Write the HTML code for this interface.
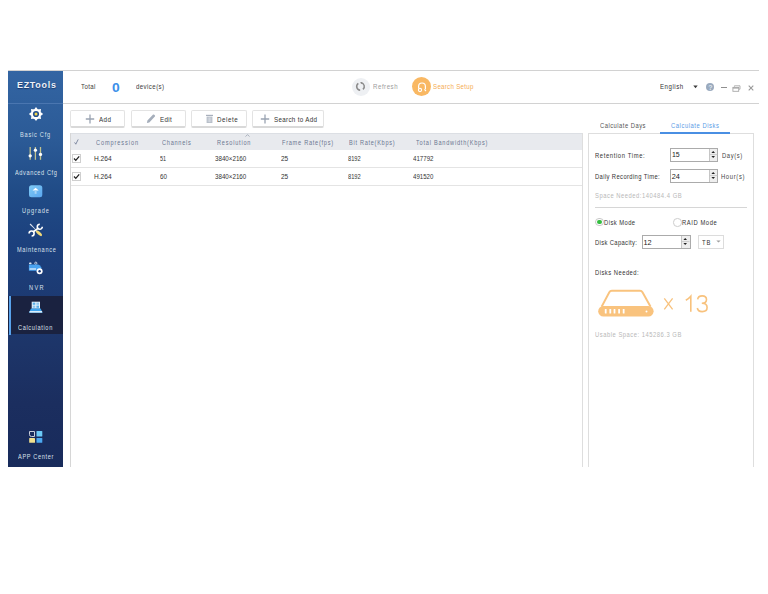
<!DOCTYPE html>
<html><head><meta charset="utf-8">
<style>
*{margin:0;padding:0;box-sizing:border-box}
html,body{width:768px;height:594px;background:#fff;overflow:hidden;font-family:"Liberation Sans",sans-serif;color:#333}
.a{position:absolute}
.t{position:absolute;white-space:nowrap;transform-origin:0 0;font-family:"Liberation Sans",sans-serif}
#side{left:8px;top:70px;width:55px;height:397px;background:linear-gradient(180deg,#3365a3 0%,#2b5a96 18%,#204b86 31%,#1c407d 44%,#1d3569 69%,#1b2e5f 84%,#182b5b 100%)}
.hl{position:absolute;height:1px}
.vl{position:absolute;width:1px}
.btn{position:absolute;top:110px;height:18px;border:1px solid #e3e3e3;border-bottom:2px solid #d9d9d9;border-radius:2px;background:#fff}
.cb{position:absolute;left:72px;width:9px;height:9px;border:1px solid #cfcfcf;background:#fff}
.inp{position:absolute;border:1px solid #ababab;background:#fff}
.spin{position:absolute;top:0;bottom:0;right:0;border-left:1px solid #c6c6c6;background:#eeeeee}
</style></head><body>
<div id="side" class="a">
  <div class="a" style="left:0;top:33px;width:55px;height:1px;background:#4a76b0"></div>
  
  <!-- gear -->
  <svg class="a" style="left:18.7px;top:35.1px" width="18" height="18" viewBox="0 0 18 18">
    <g transform="translate(9 9)" fill="#fff">
      <circle r="5.2"/>
      <polygon points="-1.9,-4.6 0,-7.1 1.9,-4.6" transform="rotate(0)"/>
      <polygon points="-1.9,-4.6 0,-7.1 1.9,-4.6" transform="rotate(45)"/>
      <polygon points="-1.9,-4.6 0,-7.1 1.9,-4.6" transform="rotate(90)"/>
      <polygon points="-1.9,-4.6 0,-7.1 1.9,-4.6" transform="rotate(135)"/>
      <polygon points="-1.9,-4.6 0,-7.1 1.9,-4.6" transform="rotate(180)"/>
      <polygon points="-1.9,-4.6 0,-7.1 1.9,-4.6" transform="rotate(225)"/>
      <polygon points="-1.9,-4.6 0,-7.1 1.9,-4.6" transform="rotate(270)"/>
      <polygon points="-1.9,-4.6 0,-7.1 1.9,-4.6" transform="rotate(315)"/>
      <circle r="3.1" fill="#24508f"/>
      <circle r="1.5" fill="#f3d54a"/>
    </g>
  </svg>
  <!-- sliders -->
  <svg class="a" style="left:19px;top:75px" width="18" height="16" viewBox="0 0 18 16">
    <g stroke="#c2c28c" stroke-width="1.3">
      <line x1="3.2" y1="2" x2="3.2" y2="14.8"/>
      <line x1="8.4" y1="2" x2="8.4" y2="14.8"/>
      <line x1="13.5" y1="2" x2="13.5" y2="14.8"/>
    </g>
    <g fill="#fff">
      <circle cx="3.2" cy="10.8" r="1.65"/>
      <circle cx="8.4" cy="5.2" r="1.65"/>
      <circle cx="13.5" cy="9.4" r="1.65"/>
    </g>
  </svg>
  <!-- upgrade -->
  <svg class="a" style="left:19px;top:113px" width="18" height="16" viewBox="0 0 18 16">
    <defs><linearGradient id="ug" x1="0" y1="0" x2="1" y2="1"><stop offset="0" stop-color="#80cbf5"/><stop offset="1" stop-color="#5aa6ef"/></linearGradient></defs><rect x="2" y="2.2" width="13.3" height="12" rx="2.5" fill="url(#ug)"/>
    <polygon points="5.5,7.5 8.6,4.8 11.7,7.5" fill="#fff"/>
    <rect x="7.6" y="7.3" width="2" height="3.5" fill="#a8d4f5"/>
  </svg>
  <!-- maintenance -->
  <svg class="a" style="left:19px;top:151px" width="18" height="18" viewBox="0 0 18 18">
    <path d="M2.6 3.6 L3.6 2.6 L8.8 8.4 L8.4 8.8 Z" fill="#dfe5f0"/>
    <ellipse cx="11.9" cy="12.2" rx="3.9" ry="1.5" transform="rotate(42 11.9 12.2)" fill="#f3da78"/>
    <path d="M6 11 L11.3 7.1" stroke="#fff" stroke-width="1.6"/>
    <path d="M15.3 5.7 A2.5 2.5 0 1 1 12.8 3.2" fill="none" stroke="#fff" stroke-width="1.6"/>
    <path d="M2.1 12.5 A2.5 2.5 0 1 1 4.6 15" fill="none" stroke="#fff" stroke-width="1.6"/>
  </svg>
  <!-- nvr -->
  <svg class="a" style="left:19px;top:190px" width="18" height="18" viewBox="0 0 18 18">
    <rect x="2" y="2.6" width="2.6" height="1.6" rx="0.8" fill="#dfe8f5"/>
    <circle cx="8.8" cy="3.2" r="1.1" fill="none" stroke="#dfe8f5" stroke-width="0.8"/>
    <path d="M1.9 4.4 H10.6 Q12 4.4 13 5.6 L14.2 7.2 V10.8 H1.9 Z" fill="#4aa3f0"/>
    <rect x="2.6" y="8.3" width="6.4" height="1.4" fill="#d4e8fb"/>
    <circle cx="12.6" cy="11.3" r="3" fill="#fff"/>
    <circle cx="12.6" cy="11.3" r="1.2" fill="#1c3a78"/>
  </svg>
  <!-- active -->
  <div class="a" style="left:0;top:226px;width:55px;height:38px;background:#1a2240"></div>
  <div class="a" style="left:1px;top:226px;width:1.5px;height:38.5px;background:#58a2ec"></div>
  <svg class="a" style="left:19px;top:229px" width="18" height="16" viewBox="0 0 18 16">
    <rect x="4.7" y="2.7" width="8.3" height="7" fill="#e6f2fb"/>
    <rect x="5.7" y="3.6" width="2.6" height="2.2" fill="#59aee8"/>
    <rect x="9.4" y="3.6" width="2.6" height="2.2" fill="#8cc6ee"/>
    <rect x="5.7" y="6.6" width="2.6" height="2.2" fill="#8cc6ee"/>
    <rect x="9.4" y="6.6" width="2.6" height="2.2" fill="#59aee8"/>
    <path d="M4 9.5 H13.6 L15.7 13.8 H1.9 Z" fill="#3ea4ef"/>
    <rect x="2.5" y="12" width="12.6" height="1.6" fill="#d9eefc"/>
  </svg>
  <!-- app center -->
  <svg class="a" style="left:19px;top:359px" width="18" height="16" viewBox="0 0 18 16">
    <path d="M2.5 2.5 H7.5 V7.5 H4.5 Q2.5 7.5 2.5 5.5 Z" fill="none" stroke="#c9cfdc" stroke-width="1"/>
    <rect x="9.5" y="2" width="5.8" height="5.5" rx="0.6" fill="#6ccaf7"/>
    <rect x="2.2" y="9" width="5.8" height="4.8" rx="0.6" fill="#f1e08e"/>
    <rect x="9.5" y="9" width="5.8" height="4.8" rx="0.6" fill="#4ca9f1"/>
  </svg>
</div>

<!-- window borders -->
<div class="hl" style="left:8px;top:70px;width:751px;background:#d2d2d2"></div>
<div class="hl" style="left:63px;top:103px;width:696px;background:#d2d2d2"></div>

<!-- refresh -->
<div class="a" style="left:351.5px;top:77.5px;width:18.5px;height:18.5px;border-radius:50%;background:#eef0f3"></div>
<svg class="a" style="left:355.2px;top:81.2px" width="11" height="11" viewBox="0 0 11 11">
  <path d="M3.32 2.39 A3.8 3.8 0 0 0 5.17 9.28" fill="none" stroke="#8a8a8a" stroke-width="1.5"/>
  <path d="M5.83 1.71 A3.8 3.8 0 0 1 7.94 8.41" fill="none" stroke="#8a8a8a" stroke-width="1.5"/>
  <path d="M5.2 0.9 L7.6 1.3 L6.4 2.9 Z" fill="#8a8a8a"/>
</svg>
<!-- search setup -->
<div class="a" style="left:412px;top:77.3px;width:19px;height:19px;border-radius:50%;background:#f9b863"></div>
<svg class="a" style="left:414.5px;top:80px" width="14" height="14" viewBox="0 0 14 14">
  <path d="M3.6 8.5 V6.4 A3.4 3.4 0 0 1 10.4 6.4 V9.2" fill="none" stroke="#fff" stroke-width="1.2"/>
  <circle cx="5" cy="10" r="1.6" fill="none" stroke="#fff" stroke-width="1.1"/>
  <path d="M9.4 9.3 L11 11" stroke="#fff" stroke-width="1.1"/>
</svg>

<!-- english / window controls -->
<svg class="a" style="left:693px;top:84.5px" width="5" height="4" viewBox="0 0 5 4"><path d="M0.3 0.6 H4.7 L2.5 3.2 Z" fill="#3a3a3a"/></svg>
<div class="a" style="left:706px;top:83.2px;width:8.2px;height:8.2px;border-radius:50%;background:#9aaabe"></div>
<div class="t" style="left:708.3px;top:83.6px;font-size:7px;line-height:7px;color:#dfe5ee;font-weight:700">?</div>
<div class="hl" style="left:721px;top:87px;width:5.5px;height:1px;background:#8f8f8f"></div>
<svg class="a" style="left:732px;top:84.5px" width="9" height="7" viewBox="0 0 9 7">
  <path d="M2.4 1.8 V0.8 H8 V4.2 H7" fill="none" stroke="#aaaaaa" stroke-width="0.9"/>
  <rect x="0.9" y="2.4" width="5.8" height="3.9" fill="none" stroke="#a8a8a8" stroke-width="0.9"/>
  <rect x="0.9" y="2.4" width="5.8" height="1.2" fill="#a8a8a8"/>
</svg>
<svg class="a" style="left:747.5px;top:84.8px" width="6" height="6" viewBox="0 0 6 6">
  <path d="M0.7 0.7 L5.3 5.3 M5.3 0.7 L0.7 5.3" stroke="#999999" stroke-width="1.1"/>
</svg>

<!-- toolbar buttons -->
<div class="btn" style="left:70px;width:55px"></div>
<div class="btn" style="left:131px;width:54.5px"></div>
<div class="btn" style="left:191px;width:55.5px"></div>
<div class="btn" style="left:251.5px;width:72px"></div>
<svg class="a" style="left:85px;top:114px" width="10" height="10" viewBox="0 0 10 10"><path d="M5 0.6 V9.4 M0.8 5 H9.2" stroke="#9aa4b2" stroke-width="1.3"/></svg>
<svg class="a" style="left:146px;top:114px" width="10" height="10" viewBox="0 0 10 10"><path d="M0.9 9 L1.4 6.4 L7.1 0.6 Q8.1 0.4 9 1.4 Q9.2 2.2 8.9 2.5 L3.3 8.4 Z" fill="#a5aebb"/></svg>
<svg class="a" style="left:204.5px;top:114px" width="9" height="10" viewBox="0 0 9 10">
  <rect x="1" y="0.8" width="7" height="1.2" fill="#a8b0bc"/>
  <rect x="1.6" y="2.6" width="5.8" height="6.4" fill="#b6bdc8"/>
  <path d="M3.2 3.4 V8.2 M4.5 3.4 V8.2 M5.8 3.4 V8.2" stroke="#e6e9ee" stroke-width="0.6"/>
</svg>
<svg class="a" style="left:260px;top:114px" width="10" height="10" viewBox="0 0 10 10"><path d="M5 0.6 V9.4 M0.8 5 H9.2" stroke="#9aa4b2" stroke-width="1.3"/></svg>

<!-- table -->
<div class="a" style="left:70px;top:133px;width:513px;height:16.5px;background:#e8eaee;border-top:1px solid #dcdfe4"></div>
<div class="vl" style="left:70px;top:133px;height:334px;background:#d6d6d6"></div>
<div class="vl" style="left:582px;top:133px;height:334px;background:#dedede"></div>
<div class="hl" style="left:71px;top:167px;width:511px;background:#e4e4e4"></div>
<div class="hl" style="left:71px;top:185px;width:511px;background:#e4e4e4"></div>
<svg class="a" style="left:73.5px;top:139px" width="5" height="6" viewBox="0 0 5 6"><path d="M0.6 3.4 L1.8 5.2 L4.2 0.4" fill="none" stroke="#75809a" stroke-width="0.9"/></svg>
<svg class="a" style="left:244.5px;top:133.5px" width="5" height="3" viewBox="0 0 5 3"><path d="M0.5 2.6 L2.5 0.6 L4.5 2.6" fill="none" stroke="#9aa3b1" stroke-width="0.8"/></svg>
<div class="cb" style="top:154px"></div>
<div class="cb" style="top:172.3px"></div>
<svg class="a" style="left:73px;top:155px" width="7" height="7" viewBox="0 0 7 7"><path d="M1 3.5 L2.8 5.4 L6.2 1.4" fill="none" stroke="#222" stroke-width="1.3"/></svg>
<svg class="a" style="left:73px;top:173.3px" width="7" height="7" viewBox="0 0 7 7"><path d="M1 3.5 L2.8 5.4 L6.2 1.4" fill="none" stroke="#222" stroke-width="1.3"/></svg>

<!-- right panel -->
<div class="vl" style="left:588px;top:132.5px;height:334.5px;background:#dedede"></div>
<div class="vl" style="left:753px;top:132.5px;height:334.5px;background:#dedede"></div>
<div class="hl" style="left:588px;top:132.5px;width:166px;background:#dedede"></div>
<div class="a" style="left:660px;top:131.8px;width:69.5px;height:2px;background:#4a8fe3"></div>

<div class="inp" style="left:670px;top:148px;width:48px;height:13.5px"><div class="spin" style="width:8px"></div></div>
<div class="inp" style="left:670px;top:169.3px;width:48px;height:13.5px"><div class="spin" style="width:8px"></div></div>
<div class="inp" style="left:641.5px;top:235.2px;width:49px;height:13.5px"><div class="spin" style="width:8.5px"></div></div>
<svg class="a" style="left:709px;top:148.0px" width="9" height="13.5" viewBox="0 0 9 13.5">
 <path d="M0.5 6.6 H8.5" stroke="#c2c2c2" stroke-width="0.8"/><path d="M2.4 5 L4.2 3 L6 5 Z M2.4 8 L4.2 10 L6 8 Z" fill="#222"/>
</svg>
<svg class="a" style="left:709px;top:169.3px" width="9" height="13.5" viewBox="0 0 9 13.5">
 <path d="M0.5 6.6 H8.5" stroke="#c2c2c2" stroke-width="0.8"/><path d="M2.4 5 L4.2 3 L6 5 Z M2.4 8 L4.2 10 L6 8 Z" fill="#222"/>
</svg>
<svg class="a" style="left:681px;top:235.2px" width="9" height="13.5" viewBox="0 0 9 13.5">
 <path d="M0.5 6.6 H8.5" stroke="#c2c2c2" stroke-width="0.8"/><path d="M2.4 5 L4.2 3 L6 5 Z M2.4 8 L4.2 10 L6 8 Z" fill="#222"/>
</svg>
<div class="hl" style="left:595px;top:207.3px;width:152px;background:#d6d6d6"></div>
<!-- radios -->
<div class="a" style="left:595px;top:217.8px;width:8.7px;height:8.7px;border-radius:50%;border:1px solid #c9c9c9;background:#fff"></div>
<div class="a" style="left:597.1px;top:219.9px;width:4.5px;height:4.5px;border-radius:50%;background:#33bd3f"></div>
<div class="a" style="left:673px;top:218.4px;width:8.5px;height:8.5px;border-radius:50%;border:1px solid #cdcdcd;background:#fff"></div>
<!-- TB select -->
<div class="a" style="left:698.2px;top:235.2px;width:26px;height:13.5px;border:1px solid #dcdcdc;background:#fff"></div>
<svg class="a" style="left:715.5px;top:240px" width="5" height="3" viewBox="0 0 5 3"><path d="M0.3 0.4 H4.7 L2.5 2.6 Z" fill="#a0a0a0"/></svg>
<!-- disk icon -->
<svg class="a" style="left:597px;top:289px" width="58" height="29" viewBox="0 0 58 29">
  <path d="M4.6 17.8 L12.3 3.2 Q13.1 1.7 14.8 1.7 H43 Q44.7 1.7 45.5 3.2 L53.6 17.8" fill="none" stroke="#f9c37e" stroke-width="1.9" stroke-linejoin="round"/>
  <rect x="1.2" y="17" width="55.4" height="10.4" rx="5.2" fill="#f9c37e"/>
  <rect x="7.8" y="19.9" width="1.8" height="4.6" rx="0.5" fill="#fff"/>
  <rect x="12.4" y="19.9" width="1.8" height="4.6" rx="0.5" fill="#fff"/>
  <rect x="16.6" y="19.9" width="1.8" height="4.6" rx="0.5" fill="#fff"/>
  <rect x="21.2" y="19.9" width="1.8" height="4.6" rx="0.5" fill="#fff"/>
  <rect x="25.75" y="19.9" width="1.8" height="4.6" rx="0.5" fill="#fff"/>
  <circle cx="49.5" cy="22.4" r="1" fill="#fff"/>
</svg>
<!-- x 13 -->
<svg class="a" style="left:660px;top:290px" width="52" height="26" viewBox="0 0 52 26">
  <g fill="none" stroke="#f8c27d" stroke-width="1.6">
    <path d="M4.3 8.3 L12.6 19.4 M12.6 8.3 L4.3 19.4" stroke-width="1.3"/>
    <path d="M25.8 10.3 Q28.8 8.6 30.8 6.2 V21.7"/>
    <path d="M37.7 9.4 C37.9 7.1 39.8 5.9 42.2 5.9 C44.8 5.9 46.5 7.4 46.5 9.6 C46.5 11.9 44.6 13.3 41.8 13.3 C45.2 13.3 47.1 15 47.1 17.5 C47.1 20.1 45 21.6 42.2 21.6 C39.6 21.6 37.7 20.3 37.3 18"/>
  </g>
</svg>
<div class="t" style="left:81.05px;top:83.24px;font-size:7.65px;line-height:7.65px;color:#3a3a3a;font-weight:400;letter-spacing:0.422px;transform:scaleX(0.800)">Total</div>
<div class="t" style="left:112.08px;top:80.61px;font-size:13.48px;line-height:13.48px;color:#3b8fe9;font-weight:700;letter-spacing:0.000px;transform:scaleX(1.031)">0</div>
<div class="t" style="left:136.40px;top:83.24px;font-size:7.65px;line-height:7.65px;color:#3a3a3a;font-weight:400;letter-spacing:0.516px;transform:scaleX(0.800)">device(s)</div>
<div class="t" style="left:372.80px;top:83.14px;font-size:7.65px;line-height:7.65px;color:#9c9c9c;font-weight:400;letter-spacing:0.667px;transform:scaleX(0.800)">Refresh</div>
<div class="t" style="left:433.40px;top:83.14px;font-size:7.65px;line-height:7.65px;color:#f5ac52;font-weight:400;letter-spacing:0.375px;transform:scaleX(0.800)">Search Setup</div>
<div class="t" style="left:660.10px;top:83.14px;font-size:7.65px;line-height:7.65px;color:#333333;font-weight:400;letter-spacing:0.646px;transform:scaleX(0.800)">English</div>
<div class="t" style="left:99.10px;top:115.71px;font-size:7.80px;line-height:7.80px;color:#333333;font-weight:400;letter-spacing:0.500px;transform:scaleX(0.800)">Add</div>
<div class="t" style="left:159.60px;top:115.71px;font-size:7.80px;line-height:7.80px;color:#333333;font-weight:400;letter-spacing:0.375px;transform:scaleX(0.800)">Edit</div>
<div class="t" style="left:216.85px;top:115.71px;font-size:7.80px;line-height:7.80px;color:#333333;font-weight:400;letter-spacing:0.650px;transform:scaleX(0.800)">Delete</div>
<div class="t" style="left:273.50px;top:115.71px;font-size:7.80px;line-height:7.80px;color:#333333;font-weight:400;letter-spacing:0.385px;transform:scaleX(0.800)">Search to Add</div>
<div class="t" style="left:96.05px;top:138.78px;font-size:7.00px;line-height:7.00px;color:#6a7690;font-weight:400;letter-spacing:1.137px;transform:scaleX(0.800)">Compression</div>
<div class="t" style="left:161.70px;top:138.78px;font-size:7.00px;line-height:7.00px;color:#6a7690;font-weight:400;letter-spacing:0.920px;transform:scaleX(0.800)">Channels</div>
<div class="t" style="left:216.85px;top:138.78px;font-size:7.00px;line-height:7.00px;color:#6a7690;font-weight:400;letter-spacing:0.965px;transform:scaleX(0.800)">Resolution</div>
<div class="t" style="left:282.35px;top:138.78px;font-size:7.00px;line-height:7.00px;color:#6a7690;font-weight:400;letter-spacing:0.924px;transform:scaleX(0.800)">Frame Rate(fps)</div>
<div class="t" style="left:348.60px;top:138.78px;font-size:7.00px;line-height:7.00px;color:#6a7690;font-weight:400;letter-spacing:0.885px;transform:scaleX(0.800)">Bit Rate(Kbps)</div>
<div class="t" style="left:415.80px;top:138.78px;font-size:7.00px;line-height:7.00px;color:#6a7690;font-weight:400;letter-spacing:0.956px;transform:scaleX(0.800)">Total Bandwidth(Kbps)</div>
<div class="t" style="left:93.57px;top:155.29px;font-size:7.70px;line-height:7.70px;color:#333333;font-weight:400;letter-spacing:0.000px;transform:scaleX(0.856)">H.264</div>
<div class="t" style="left:160.42px;top:155.29px;font-size:7.70px;line-height:7.70px;color:#333333;font-weight:400;letter-spacing:0.000px;transform:scaleX(0.706)">51</div>
<div class="t" style="left:215.40px;top:155.29px;font-size:7.70px;line-height:7.70px;color:#333333;font-weight:400;letter-spacing:0.000px;transform:scaleX(0.808)">3840×2160</div>
<div class="t" style="left:280.79px;top:155.29px;font-size:7.70px;line-height:7.70px;color:#333333;font-weight:400;letter-spacing:0.000px;transform:scaleX(0.844)">25</div>
<div class="t" style="left:347.56px;top:155.29px;font-size:7.70px;line-height:7.70px;color:#333333;font-weight:400;letter-spacing:0.000px;transform:scaleX(0.742)">8192</div>
<div class="t" style="left:412.90px;top:155.29px;font-size:7.70px;line-height:7.70px;color:#333333;font-weight:400;letter-spacing:0.000px;transform:scaleX(0.800)">417792</div>
<div class="t" style="left:93.57px;top:173.29px;font-size:7.70px;line-height:7.70px;color:#333333;font-weight:400;letter-spacing:0.000px;transform:scaleX(0.856)">H.264</div>
<div class="t" style="left:160.40px;top:173.29px;font-size:7.70px;line-height:7.70px;color:#333333;font-weight:400;letter-spacing:0.000px;transform:scaleX(0.812)">60</div>
<div class="t" style="left:215.40px;top:173.29px;font-size:7.70px;line-height:7.70px;color:#333333;font-weight:400;letter-spacing:0.000px;transform:scaleX(0.808)">3840×2160</div>
<div class="t" style="left:280.79px;top:173.29px;font-size:7.70px;line-height:7.70px;color:#333333;font-weight:400;letter-spacing:0.000px;transform:scaleX(0.844)">25</div>
<div class="t" style="left:347.56px;top:173.29px;font-size:7.70px;line-height:7.70px;color:#333333;font-weight:400;letter-spacing:0.000px;transform:scaleX(0.742)">8192</div>
<div class="t" style="left:412.90px;top:173.29px;font-size:7.70px;line-height:7.70px;color:#333333;font-weight:400;letter-spacing:0.000px;transform:scaleX(0.792)">491520</div>
<div class="t" style="left:599.80px;top:121.73px;font-size:7.30px;line-height:7.30px;color:#555555;font-weight:400;letter-spacing:0.596px;transform:scaleX(0.800)">Calculate Days</div>
<div class="t" style="left:670.55px;top:121.73px;font-size:7.30px;line-height:7.30px;color:#5b9be6;font-weight:400;letter-spacing:0.688px;transform:scaleX(0.800)">Calculate Disks</div>
<div class="t" style="left:594.60px;top:151.53px;font-size:7.30px;line-height:7.30px;color:#333333;font-weight:400;letter-spacing:0.781px;transform:scaleX(0.800)">Retention Time:</div>
<div class="t" style="left:672.12px;top:151.33px;font-size:7.30px;line-height:7.30px;color:#222222;font-weight:400;letter-spacing:0.000px;transform:scaleX(0.952)">15</div>
<div class="t" style="left:721.60px;top:151.53px;font-size:7.30px;line-height:7.30px;color:#444444;font-weight:400;letter-spacing:0.750px;transform:scaleX(0.800)">Day(s)</div>
<div class="t" style="left:594.60px;top:173.33px;font-size:7.30px;line-height:7.30px;color:#333333;font-weight:400;letter-spacing:0.472px;transform:scaleX(0.800)">Daily Recording Time:</div>
<div class="t" style="left:671.75px;top:173.23px;font-size:7.30px;line-height:7.30px;color:#222222;font-weight:400;letter-spacing:0.000px;transform:scaleX(1.000)">24</div>
<div class="t" style="left:721.35px;top:173.33px;font-size:7.30px;line-height:7.30px;color:#444444;font-weight:400;letter-spacing:0.823px;transform:scaleX(0.800)">Hour(s)</div>
<div class="t" style="left:595.05px;top:192.13px;font-size:7.30px;line-height:7.30px;color:#b8b8b8;font-weight:400;letter-spacing:0.649px;transform:scaleX(0.800)">Space Needed:140484.4 GB</div>
<div class="t" style="left:604.35px;top:218.93px;font-size:7.30px;line-height:7.30px;color:#333333;font-weight:400;letter-spacing:0.547px;transform:scaleX(0.800)">Disk Mode</div>
<div class="t" style="left:681.85px;top:218.93px;font-size:7.30px;line-height:7.30px;color:#333333;font-weight:400;letter-spacing:0.711px;transform:scaleX(0.800)">RAID Mode</div>
<div class="t" style="left:594.60px;top:238.83px;font-size:7.30px;line-height:7.30px;color:#333333;font-weight:400;letter-spacing:0.442px;transform:scaleX(0.800)">Disk Capacity:</div>
<div class="t" style="left:643.50px;top:238.83px;font-size:7.30px;line-height:7.30px;color:#222222;font-weight:400;letter-spacing:0.000px;transform:scaleX(1.000)">12</div>
<div class="t" style="left:701.55px;top:238.83px;font-size:7.30px;line-height:7.30px;color:#333333;font-weight:400;letter-spacing:1.250px;transform:scaleX(0.800)">TB</div>
<div class="t" style="left:594.70px;top:268.53px;font-size:7.30px;line-height:7.30px;color:#333333;font-weight:400;letter-spacing:0.594px;transform:scaleX(0.800)">Disks Needed:</div>
<div class="t" style="left:594.70px;top:331.13px;font-size:7.30px;line-height:7.30px;color:#b8b8b8;font-weight:400;letter-spacing:0.641px;transform:scaleX(0.800)">Usable Space: 145286.3 GB</div>
<div class="t" style="left:17.04px;top:79.72px;font-size:9.57px;line-height:9.57px;color:#eef2f8;font-weight:700;letter-spacing:0.792px;transform:scaleX(0.930);text-shadow:0 1px 1px rgba(10,25,70,0.55)">EZTools</div>
<div class="t" style="left:20.35px;top:130.59px;font-size:7.00px;line-height:7.00px;color:#dae1ec;font-weight:400;letter-spacing:0.961px;transform:scaleX(0.800)">Basic Cfg</div>
<div class="t" style="left:14.50px;top:168.69px;font-size:7.00px;line-height:7.00px;color:#dae1ec;font-weight:400;letter-spacing:0.761px;transform:scaleX(0.800)">Advanced Cfg</div>
<div class="t" style="left:22.20px;top:207.49px;font-size:7.00px;line-height:7.00px;color:#dae1ec;font-weight:400;letter-spacing:1.146px;transform:scaleX(0.800)">Upgrade</div>
<div class="t" style="left:16.60px;top:246.09px;font-size:7.00px;line-height:7.00px;color:#dae1ec;font-weight:400;letter-spacing:0.838px;transform:scaleX(0.800)">Maintenance</div>
<div class="t" style="left:28.50px;top:284.38px;font-size:7.00px;line-height:7.00px;color:#dae1ec;font-weight:400;letter-spacing:1.750px;transform:scaleX(0.800)">NVR</div>
<div class="t" style="left:18.05px;top:323.98px;font-size:7.00px;line-height:7.00px;color:#dae1ec;font-weight:400;letter-spacing:0.819px;transform:scaleX(0.800)">Calculation</div>
<div class="t" style="left:17.90px;top:453.28px;font-size:7.00px;line-height:7.00px;color:#dae1ec;font-weight:400;letter-spacing:0.826px;transform:scaleX(0.800)">APP Center</div>
</body></html>
